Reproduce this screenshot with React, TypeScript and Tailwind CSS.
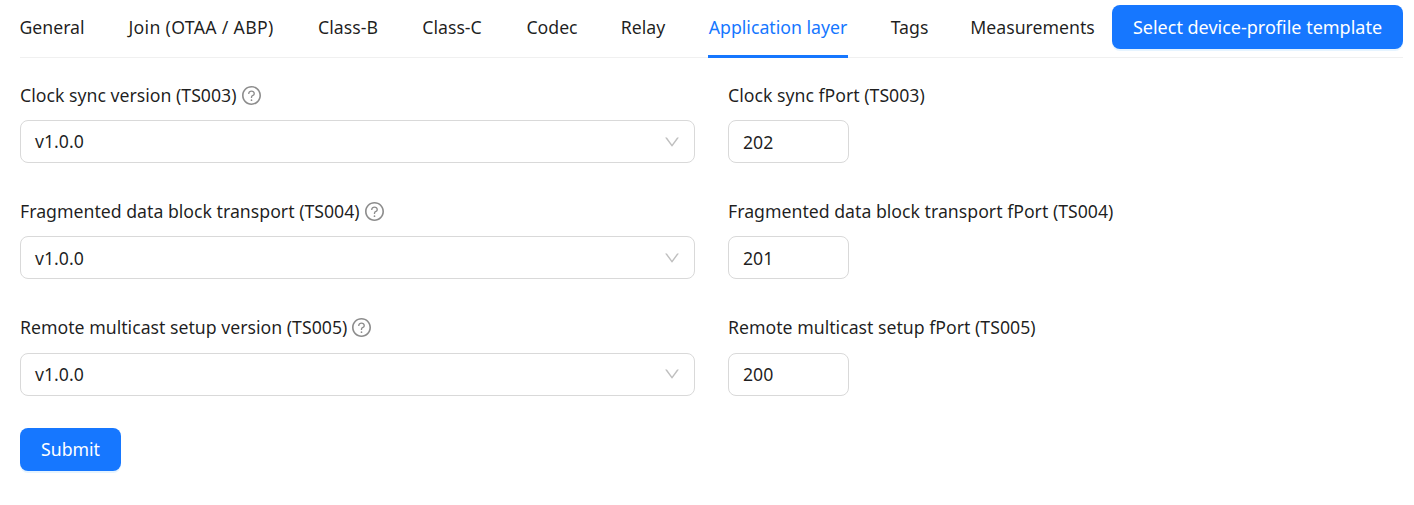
const tabs = [
  { name: "General", cls: "w-[64px]" },
  { name: "Join (OTAA / ABP)", cls: "w-[148px] tracking-[0.3px]" },
  { name: "Class-B", cls: "w-[60px]" },
  { name: "Class-C", cls: "w-[62px]" },
  { name: "Codec", cls: "w-[52px]" },
  { name: "Relay", cls: "w-[44px]" },
  { name: "Application layer", cls: "w-[140px]" },
  { name: "Tags", cls: "w-[37px]" },
  { name: "Measurements", cls: "w-[123px]" },
];

const rows = [
  { label: "Clock sync version (TS003)", portLabel: "Clock sync fPort (TS003)", port: "202" },
  { label: "Fragmented data block transport (TS004)", portLabel: "Fragmented data block transport fPort (TS004)", port: "201" },
  { label: "Remote multicast setup version (TS005)", portLabel: "Remote multicast setup fPort (TS005)", port: "200" },
];

function HelpIcon() {
  return (
    <svg viewBox="64 64 896 896" className="w-[19px] h-[19px] ml-[5px]" fill="#000" fillOpacity={0.45}>
      <path d="M512 64C264.6 64 64 264.6 64 512s200.6 448 448 448 448-200.6 448-448S759.4 64 512 64zm0 820c-205.4 0-372-166.6-372-372s166.6-372 372-372 372 166.6 372 372-166.6 372-372 372z" />
      <path d="M623.6 316.7C593.6 290.4 554 276 512 276s-81.6 14.5-111.6 40.7C369.2 344 352 380.7 352 420v7.6c0 4.4 3.6 8 8 8h48c4.4 0 8-3.6 8-8V420c0-44.1 43.1-80 96-80s96 35.9 96 80c0 31.1-22 59.6-56.1 72.7-21.2 8.1-39.2 22.3-52.1 40.9-13.1 19-19.9 41.8-19.9 64.9V620c0 4.4 3.6 8 8 8h48c4.4 0 8-3.6 8-8v-22.7a48.3 48.3 0 0 1 30.9-44.8c59-22.7 97.1-74.7 97.1-132.5.1-39.3-17.1-76-48.3-103.3z" />
      <path d="M472 732a40 40 0 1 0 80 0 40 40 0 1 0-80 0z" />
    </svg>
  );
}

function ChevronDown() {
  return (
    <svg viewBox="64 64 896 896" className="w-[16px] h-[16px]" fill="#000" fillOpacity={0.25}>
      <path d="M884 256h-75c-5.1 0-9.9 2.5-12.9 6.6L512 654.2 227.9 262.6c-3-4.1-7.8-6.6-12.9-6.6h-75c-6.5 0-10.3 7.4-6.5 12.7l352.6 486.1c12.8 17.6 39 17.6 51.7 0l352.6-486.1c3.9-5.3.1-12.7-6.4-12.7z" />
    </svg>
  );
}

export default function App() {
  return (
    <div className="min-h-screen bg-white pl-[20px] pr-[11px] pt-[5px] text-[17.7px] text-[#000000e0] font-['Noto_Sans',sans-serif]">
      <div className="flex items-start justify-between h-[53px] border-b border-[#f0f0f0]">
        <div className="flex gap-[43px] h-[52px]">
          {tabs.map((t) => (
            <div
              key={t.name}
              className={
                t.name === "Application layer"
                  ? `${t.cls} h-[53px] pt-[9px] whitespace-nowrap flex justify-center text-[#1677ff] border-b-[3px] border-[#1677ff]`
                  : `${t.cls} h-[53px] pt-[9px] whitespace-nowrap flex justify-center`
              }
            >
              {t.name}
            </div>
          ))}
        </div>
        <button className="h-[44px] w-[291px] rounded-[8px] bg-[#1677ff] text-[18px] text-white shadow-[0_2px_0_rgba(5,145,255,0.1)]">
          Select device-profile template
        </button>
      </div>

      <div className="mt-[24px] flex flex-col gap-[35.33px]">
        {rows.map((r) => (
          <div key={r.port} className="flex gap-[33px]">
            <div className="w-[675px]">
              <label className="flex items-center h-[26px] mb-[12px]">
                {r.label}
                <HelpIcon />
              </label>
              <div className="flex items-center justify-between h-[43px] pl-[14px] pr-[14px] border border-[#d9d9d9] rounded-[8px]">
                <span>v1.0.0</span>
                <ChevronDown />
              </div>
            </div>
            <div>
              <label className="flex items-center h-[26px] mb-[12px]">{r.portLabel}</label>
              <input
                defaultValue={r.port}
                className="block w-[121px] h-[43px] px-[14px] border border-[#d9d9d9] rounded-[8px] outline-none"
              />
            </div>
          </div>
        ))}
      </div>

      <button className="mt-[32.5px] w-[101px] h-[43px] rounded-[8px] bg-[#1677ff] text-white shadow-[0_2px_0_rgba(5,145,255,0.1)]">
        Submit
      </button>
    </div>
  );
}
